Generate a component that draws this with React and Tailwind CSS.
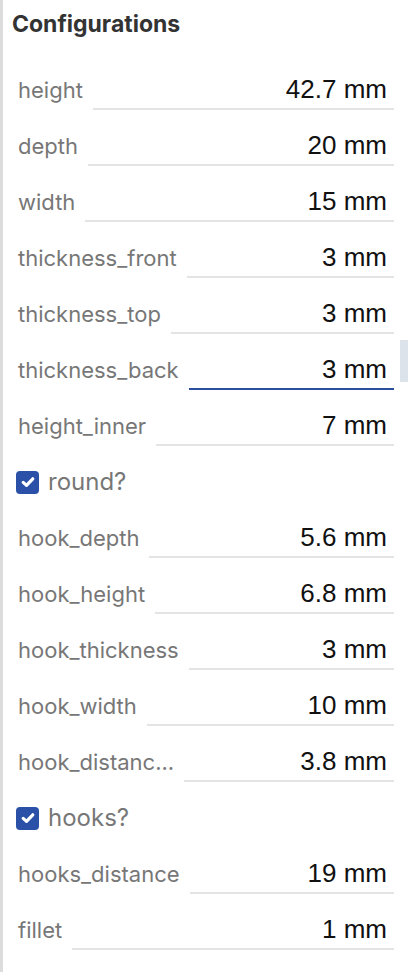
import React from "react";

const rows = [
  { t: "field", label: "height", value: "42.7 mm" },
  { t: "field", label: "depth", value: "20 mm" },
  { t: "field", label: "width", value: "15 mm" },
  { t: "field", label: "thickness_front", value: "3 mm" },
  { t: "field", label: "thickness_top", value: "3 mm" },
  { t: "field", label: "thickness_back", value: "3 mm", active: true },
  { t: "field", label: "height_inner", value: "7 mm" },
  { t: "check", label: "round?" },
  { t: "field", label: "hook_depth", value: "5.6 mm" },
  { t: "field", label: "hook_height", value: "6.8 mm" },
  { t: "field", label: "hook_thickness", value: "3 mm" },
  { t: "field", label: "hook_width", value: "10 mm" },
  { t: "field", label: "hook_distanc...", value: "3.8 mm" },
  { t: "check", label: "hooks?" },
  { t: "field", label: "hooks_distance", value: "19 mm" },
  { t: "field", label: "fillet", value: "1 mm" },
];

function Check() {
  return (
    <div className="w-[23px] h-[23px] rounded-[4px] bg-[#2a50a8] flex items-center justify-center">
      <svg width="16" height="16" viewBox="0 0 16 16">
        <path d="M3.2 8.4 L6.5 11.4 L12.8 4.8" fill="none" stroke="#fff" strokeWidth="3.2" strokeLinecap="round" strokeLinejoin="round" />
      </svg>
    </div>
  );
}

export default function App() {
  return (
    <div className="relative w-[408px] h-[972px] bg-white overflow-hidden">
      <div className="h-full border-l-[3px] border-[#dcdcdc] ml-0 pr-[14px]">
        <div className="h-[46px] pt-[2px] flex items-center pl-[9px] text-[23px] font-bold text-[#333333]" style={{ fontFamily: "Inter, sans-serif" }}>
          Configurations
        </div>
        <div className="mt-[16px] flex flex-col">
          {rows.map((r, i) =>
            r.t === "field" ? (
              <div key={i} className="h-[56px] flex items-center pl-[15px]">
                <div className="text-[22px] text-[#777777] whitespace-nowrap" style={{ fontFamily: "Inter, sans-serif" }}>
                  {r.label}
                </div>
                <div
                  className={
                    "ml-[10px] flex-1 h-[40px] flex items-center justify-end pr-[7px] border-b-2 " +
                    (r.active ? "border-[#2a4f9e]" : "border-[#e4e4e4]")
                  }
                >
                  <span className="text-[26px] text-[#111111] whitespace-nowrap" style={{ fontFamily: "'Liberation Sans', Arial, sans-serif" }}>
                    {r.value}
                  </span>
                </div>
              </div>
            ) : (
              <div key={i} className="h-[56px] flex items-center pl-[13px] gap-[9px]">
                <Check />
                <span className="text-[24px] text-[#777777]" style={{ fontFamily: "Inter, sans-serif" }}>
                  {r.label}
                </span>
              </div>
            )
          )}
        </div>
      </div>
      <div className="absolute right-0 top-[340px] w-[8px] h-[42px] bg-[#dde3ea]" />
    </div>
  );
}
